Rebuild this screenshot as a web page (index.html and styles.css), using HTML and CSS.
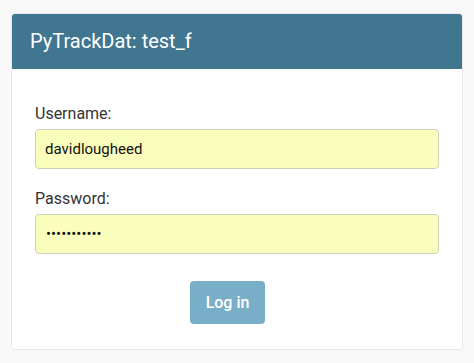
FILE: index.html
```html
<!DOCTYPE html>
<html>
<head>
<meta charset="utf-8">
<link rel="stylesheet" href="styles.css">
</head>
<body>
<div class="page">
  <div class="card">
    <div class="card-header">PyTrackDat: test_f</div>
    <form class="card-body">
      <label class="label" for="u">Username:</label>
      <input class="field" id="u" type="text" value="davidlougheed">
      <label class="label label-pw" for="p">Password:</label>
      <input class="field field-pw" id="p" type="password" value="abcdefghijk">
      <div class="actions">
        <button class="btn" type="button">Log in</button>
      </div>
    </form>
  </div>
</div>
</body>
</html>
```
FILE: styles.css
```css
html, body {
  margin: 0;
  padding: 0;
  background: #f8f8f8;
  font-family: Roboto, "Liberation Sans", sans-serif;
}
.page {
  padding: 13px 11px 0 11px;
}
.card {
  width: 452px;
  box-sizing: border-box;
  background: #fff;
  border: 1px solid #e8e8e8;
  border-radius: 4px;
  overflow: hidden;
}
.card-header {
  height: 56px;
  line-height: 56px;
  background: #417690;
  color: #fff;
  font-size: 20px;
  padding-left: 19px;
  margin: -1px -1px 0 -1px;
}
.card-body {
  display: flex;
  flex-direction: column;
  padding: 35px 23px 25px 23px;
  margin: 0;
}
.label {
  font-size: 16px;
  line-height: 20px;
  color: #333;
  margin-bottom: 5px;
}
.label-pw {
  margin-top: 20px;
}
.field {
  height: 40px;
  box-sizing: border-box;
  border: 1px solid #cfcfb8;
  border-radius: 4px;
  background: #fafebd;
  font-family: Roboto, "Liberation Sans", sans-serif;
  font-size: 15px;
  color: #111;
  padding: 0 9px;
  outline: none;
}
.field-pw {
  font-size: 15px;
  padding-left: 10px;
}
.actions {
  display: flex;
  justify-content: center;
  margin-top: 27px;
}
.btn {
  width: 75px;
  height: 43px;
  border: none;
  border-radius: 4px;
  background: #79aec8;
  color: #fff;
  font-family: Roboto, "Liberation Sans", sans-serif;
  font-size: 16px;
  font-weight: 500;
  padding: 0;
  margin-right: 19px;
}
```
